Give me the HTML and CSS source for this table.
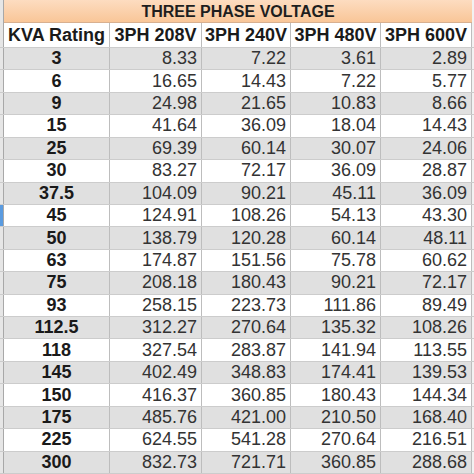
FILE: index.html
```html
<!DOCTYPE html>
<html>
<head>
<meta charset="utf-8">
<link rel="stylesheet" href="styles.css">
</head>
<body>
<div class="sheet">
  <div class="row title-row"><div class="rh"></div><div class="title">THREE PHASE VOLTAGE</div><div class="edge"></div></div>
  <div class="row head-row"><div class="rh"></div><div class="c kva">KVA Rating</div><div class="c hd">3PH 208V</div><div class="c hd">3PH 240V</div><div class="c hd">3PH 480V</div><div class="c hd">3PH 600V</div><div class="edge"></div></div>
  <div class="row g"><div class="rh"></div><div class="c kva">3</div><div class="c n">8.33</div><div class="c n">7.22</div><div class="c n">3.61</div><div class="c n">2.89</div><div class="edge"></div></div>
  <div class="row"><div class="rh"></div><div class="c kva">6</div><div class="c n">16.65</div><div class="c n">14.43</div><div class="c n">7.22</div><div class="c n">5.77</div><div class="edge"></div></div>
  <div class="row g"><div class="rh"></div><div class="c kva">9</div><div class="c n">24.98</div><div class="c n">21.65</div><div class="c n">10.83</div><div class="c n">8.66</div><div class="edge"></div></div>
  <div class="row"><div class="rh"></div><div class="c kva">15</div><div class="c n">41.64</div><div class="c n">36.09</div><div class="c n">18.04</div><div class="c n">14.43</div><div class="edge"></div></div>
  <div class="row g"><div class="rh"></div><div class="c kva">25</div><div class="c n">69.39</div><div class="c n">60.14</div><div class="c n">30.07</div><div class="c n">24.06</div><div class="edge"></div></div>
  <div class="row"><div class="rh"></div><div class="c kva">30</div><div class="c n">83.27</div><div class="c n">72.17</div><div class="c n">36.09</div><div class="c n">28.87</div><div class="edge"></div></div>
  <div class="row g"><div class="rh"></div><div class="c kva">37.5</div><div class="c n">104.09</div><div class="c n">90.21</div><div class="c n">45.11</div><div class="c n">36.09</div><div class="edge"></div></div>
  <div class="row"><div class="rh sel"></div><div class="c kva">45</div><div class="c n">124.91</div><div class="c n">108.26</div><div class="c n">54.13</div><div class="c n">43.30</div><div class="edge"></div></div>
  <div class="row g"><div class="rh"></div><div class="c kva">50</div><div class="c n">138.79</div><div class="c n">120.28</div><div class="c n">60.14</div><div class="c n">48.11</div><div class="edge"></div></div>
  <div class="row"><div class="rh"></div><div class="c kva">63</div><div class="c n">174.87</div><div class="c n">151.56</div><div class="c n">75.78</div><div class="c n">60.62</div><div class="edge"></div></div>
  <div class="row g"><div class="rh"></div><div class="c kva">75</div><div class="c n">208.18</div><div class="c n">180.43</div><div class="c n">90.21</div><div class="c n">72.17</div><div class="edge"></div></div>
  <div class="row"><div class="rh"></div><div class="c kva">93</div><div class="c n">258.15</div><div class="c n">223.73</div><div class="c n">111.86</div><div class="c n">89.49</div><div class="edge"></div></div>
  <div class="row g"><div class="rh"></div><div class="c kva">112.5</div><div class="c n">312.27</div><div class="c n">270.64</div><div class="c n">135.32</div><div class="c n">108.26</div><div class="edge"></div></div>
  <div class="row"><div class="rh"></div><div class="c kva">118</div><div class="c n">327.54</div><div class="c n">283.87</div><div class="c n">141.94</div><div class="c n">113.55</div><div class="edge"></div></div>
  <div class="row g"><div class="rh"></div><div class="c kva">145</div><div class="c n">402.49</div><div class="c n">348.83</div><div class="c n">174.41</div><div class="c n">139.53</div><div class="edge"></div></div>
  <div class="row"><div class="rh"></div><div class="c kva">150</div><div class="c n">416.37</div><div class="c n">360.85</div><div class="c n">180.43</div><div class="c n">144.34</div><div class="edge"></div></div>
  <div class="row g"><div class="rh"></div><div class="c kva">175</div><div class="c n">485.76</div><div class="c n">421.00</div><div class="c n">210.50</div><div class="c n">168.40</div><div class="edge"></div></div>
  <div class="row"><div class="rh"></div><div class="c kva">225</div><div class="c n">624.55</div><div class="c n">541.28</div><div class="c n">270.64</div><div class="c n">216.51</div><div class="edge"></div></div>
  <div class="row g"><div class="rh"></div><div class="c kva">300</div><div class="c n">832.73</div><div class="c n">721.71</div><div class="c n">360.85</div><div class="c n">288.68</div><div class="edge"></div></div>
</div>
</body>
</html>
```
FILE: styles.css
```css
html, body {
  margin: 0;
  padding: 0;
  background: #ffffff;
}
.sheet {
  width: 474px;
  height: 474px;
  display: flex;
  flex-direction: column;
  font-family: "Liberation Sans", Arial, sans-serif;
  overflow: hidden;
}
.row {
  display: grid;
  grid-template-columns: 4px 106px 92px 89px 90px 91px 2px;
  flex: 1 1 0;
  min-height: 0;
  background: #ffffff;
  border-bottom: 1px solid #cccccc;
  box-sizing: border-box;
}
.row.g {
  background: #e0e0e0;
}
.title-row {
  flex: 0 0 23px;
  background: linear-gradient(#fddcc0, #f9c698);
  border-bottom: 1px solid #d8b090;
}
.head-row {
  flex: 0 0 25px;
}
.rh {
  background: #e6e6e6;
  border-right: 1px solid #a8a8a8;
}
.rh.sel {
  background: #5a9be0;
}
.title {
  grid-column: 2 / 7;
  text-align: center;
  font-weight: bold;
  font-size: 16px;
  line-height: 23px;
  color: #1e1e1e;
}
.c {
  border-right: 1px solid #bdbdbd;
  display: flex;
  align-items: center;
  padding: 0 4px;
  font-size: 18px;
  color: #333333;
  white-space: nowrap;
  overflow: hidden;
}
.kva {
  justify-content: center;
  font-weight: bold;
  color: #1a1a1a;
}
.hd {
  justify-content: center;
  font-weight: bold;
  color: #1a1a1a;
  padding: 0;
}
.n {
  justify-content: flex-end;
}
.edge {
  background: #f2f2f2;
}
```
